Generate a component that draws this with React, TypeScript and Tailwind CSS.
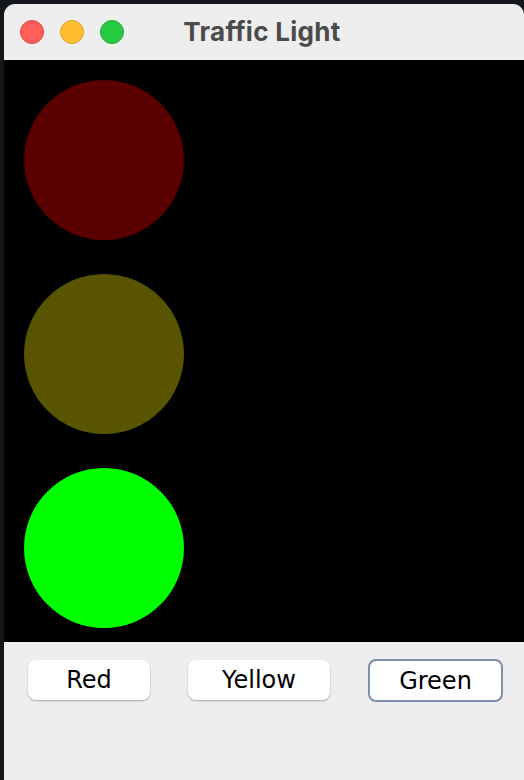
import React, { useState } from 'react';

type Light = 'red' | 'yellow' | 'green';

const App: React.FC = () => {
  const [active, setActive] = useState<Light>('green');

  const lamps: { id: Light; on: string; off: string }[] = [
    { id: 'red', on: 'bg-[#ff0000]', off: 'bg-[#5b0000]' },
    { id: 'yellow', on: 'bg-[#ffff00]', off: 'bg-[#585400]' },
    { id: 'green', on: 'bg-[#00ff00]', off: 'bg-[#005b00]' },
  ];

  const buttons: { id: Light; label: string; width: string }[] = [
    { id: 'red', label: 'Red', width: 'w-[122px]' },
    { id: 'yellow', label: 'Yellow', width: 'w-[142px]' },
    { id: 'green', label: 'Green', width: 'w-[135px]' },
  ];

  return (
    <div className="h-[780px] w-[524px] overflow-hidden bg-[#13161b] pl-1 pt-1">
      <div className="flex h-[776px] w-[520px] flex-col overflow-hidden rounded-tl-[11px] rounded-tr-[11px] bg-[#eeeeee]">
        {/* title bar */}
        <div className="relative flex h-14 shrink-0 items-center pl-4">
          <div className="flex items-center gap-4">
            <span className="h-6 w-6 rounded-full border border-[#e2463f] bg-[#fe5f57]" />
            <span className="h-6 w-6 rounded-full border border-[#e1a12a] bg-[#febc2e]" />
            <span className="h-6 w-6 rounded-full border border-[#20a934] bg-[#28c840]" />
          </div>
          <div className="absolute inset-0 flex items-center justify-center pr-1 pb-[1px]">
            <span className="font-['Inter','Liberation_Sans',sans-serif] text-[26px] font-bold tracking-[0.3px] text-[#4b4b4b]">
              Traffic Light
            </span>
          </div>
        </div>

        {/* canvas */}
        <div className="flex h-[582px] shrink-0 flex-col gap-[34px] bg-black pl-5 pt-5">
          {lamps.map(l => (
            <div
              key={l.id}
              className={`h-40 w-40 rounded-full ${active === l.id ? l.on : l.off}`}
            />
          ))}
        </div>

        {/* controls */}
        <div className="flex items-start gap-[38px] pl-6 pt-[18px]">
          {buttons.map(b => (
            <button
              key={b.id}
              onClick={() => setActive(b.id)}
              className={`${b.width} h-10 rounded-[8px] bg-white font-['DejaVu_Sans','Liberation_Sans',sans-serif] text-[24px] leading-none text-black ${
                b.id === 'green'
                  ? 'border-2 border-[#7f8fa8] h-[43px] -mt-px'
                  : 'shadow-[0_1px_2px_rgba(0,0,0,0.3)]'
              }`}
            >
              {b.label}
            </button>
          ))}
        </div>
      </div>
    </div>
  );
};

export default App;
